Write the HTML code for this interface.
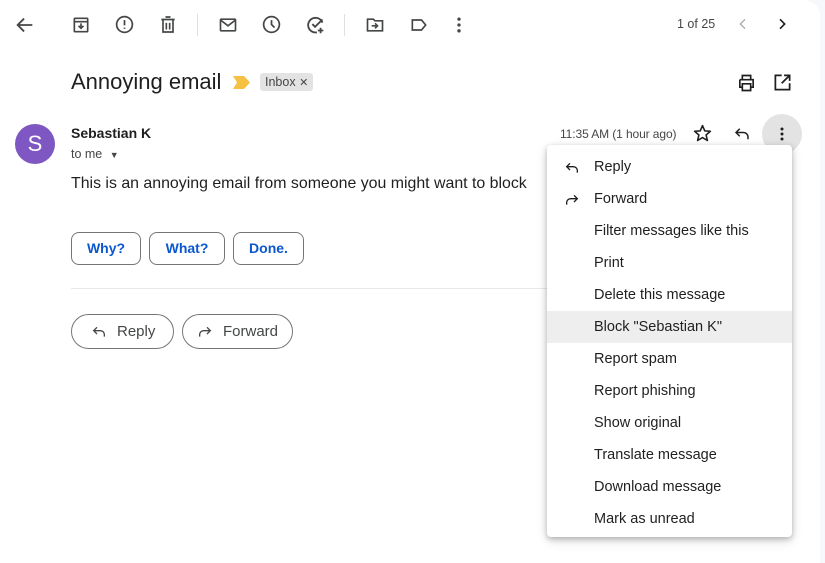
<!DOCTYPE html>
<html><head><style>
*{margin:0;padding:0;box-sizing:border-box}
body{width:825px;height:563px;background:#f6f8fc;font-family:"Liberation Sans",Arial,sans-serif;position:relative;overflow:hidden;color:#1f1f1f}
.card{position:absolute;left:0;top:0;width:820px;height:563px;background:#fff;border-top-right-radius:16px}
.ic{position:absolute}
svg{display:block}
.abs{position:absolute}
.chip{position:absolute;top:232px;height:33px;border:1px solid #747775;border-radius:8px;color:#0b57d0;font-size:14px;line-height:31px;text-align:center;font-weight:bold}
.pill{position:absolute;top:314px;height:35px;border:1px solid #747775;border-radius:18px;font-size:15px;line-height:33px;color:#444746}
.menu{position:absolute;left:547px;top:145px;width:245px;height:392px;background:#fff;border-radius:4px;box-shadow:0 2px 6px rgba(0,0,0,.25),0 4px 12px rgba(0,0,0,.12);padding-top:6px}
.mi{height:32px;line-height:32px;padding-left:47px;font-size:14.5px;color:#1f1f1f;position:relative}
.mi.h{background:#eeeeee}
</style></head><body>
<div class="card">
<svg class="ic" style="left:14px;top:14px" width="22" height="22" viewBox="0 0 24 24"><path d="M20 12H5M11 5l-7 7 7 7" fill="none" stroke="#444746" stroke-width="2"/></svg>
<svg class="ic" style="left:71px;top:15px" width="20" height="20" viewBox="0 0 24 24" fill="none" stroke="#444746" stroke-width="2"><rect x="4" y="4" width="16" height="16" rx="1"/><path d="M4 8h16M12 10v6M9 13l3 3 3-3"/></svg>
<svg class="ic" style="left:114px;top:14px" width="21" height="21" viewBox="0 0 24 24" fill="none" stroke="#444746" stroke-width="2"><circle cx="12" cy="12" r="9"/><path d="M12 7v6M12 15.5v1.5"/></svg>
<svg class="ic" style="left:158px;top:14px" width="20" height="21" viewBox="0 0 24 24" fill="none" stroke="#444746" stroke-width="2"><path d="M4 6h16M9 3h6M6 6v15h12V6M10 10v8M14 10v8"/></svg>
<div class="abs" style="left:197px;top:14px;width:1px;height:22px;background:#e0e0e0"></div>
<svg class="ic" style="left:218px;top:15px" width="20" height="20" viewBox="0 0 24 24" fill="none" stroke="#444746" stroke-width="2"><rect x="3" y="5" width="18" height="14" rx="1"/><path d="M3 6l9 7 9-7"/></svg>
<svg class="ic" style="left:261px;top:14px" width="21" height="21" viewBox="0 0 24 24" fill="none" stroke="#444746" stroke-width="2"><circle cx="12" cy="12" r="9"/><path d="M12 7v5l3.5 3.5"/></svg>
<svg class="ic" style="left:305px;top:14px" width="22" height="22" viewBox="0 0 24 24" fill="none" stroke="#444746" stroke-width="2"><path d="M19 9.5A8 8 0 1 0 13 20"/><path d="M8 11l3 3 8-8M17 15v6M14 18h6"/></svg>
<div class="abs" style="left:344px;top:14px;width:1px;height:22px;background:#e0e0e0"></div>
<svg class="ic" style="left:365px;top:15px" width="20" height="20" viewBox="0 0 24 24" fill="none" stroke="#444746" stroke-width="2"><path d="M3 5h7l2 2h9v12H3z"/><path d="M8 13h7M12 10l3 3-3 3"/></svg>
<svg class="ic" style="left:409px;top:15px" width="20" height="20" viewBox="0 0 24 24" fill="none" stroke="#444746" stroke-width="2"><path d="M4 6h11l5 6-5 6H4z"/></svg>
<svg class="ic" style="left:449px;top:15px" width="20" height="20" viewBox="0 0 24 24" fill="#444746"><circle cx="12" cy="5" r="2"/><circle cx="12" cy="12" r="2"/><circle cx="12" cy="19" r="2"/></svg>
<div class="abs" style="left:677px;top:17px;font-size:12.5px;color:#444746">1 of 25</div>
<svg class="ic" style="left:735px;top:16px" width="16" height="16" viewBox="0 0 24 24"><path d="M15 5l-7 7 7 7" fill="none" stroke="#aaa" stroke-width="2"/></svg>
<svg class="ic" style="left:774px;top:16px" width="16" height="16" viewBox="0 0 24 24"><path d="M9 5l7 7-7 7" fill="none" stroke="#1f1f1f" stroke-width="2.4"/></svg>
<div class="abs" style="left:71px;top:69px;font-size:22px;color:#1f1f1f">Annoying email</div>
<svg class="ic" style="left:233px;top:76px" width="18" height="13" viewBox="0 0 18 13"><path d="M0 0h11l6 6.5-6 6.5H0l4-6.5z" fill="#f6c042"/></svg>
<div class="abs" style="left:260px;top:73px;height:18px;padding:0 5px;background:#e3e3e3;border-radius:3px;font-size:12.5px;line-height:18px;color:#444746">Inbox <span style="font-size:11px">✕</span></div>
<svg class="ic" style="left:736px;top:73px" width="21" height="20" viewBox="0 0 24 24" fill="none" stroke="#1f1f1f" stroke-width="2"><path d="M7 8V3h10v5M4 8h16v9h-3M7 17H4V8M7 13h10v8H7z"/></svg>
<svg class="ic" style="left:773px;top:73px" width="19" height="19" viewBox="0 0 24 24" fill="none" stroke="#1f1f1f" stroke-width="2.2"><path d="M11 3H3v18h18v-8M14 3h7v7M21 3L11 13"/></svg>
<div class="abs" style="left:15px;top:124px;width:40px;height:40px;border-radius:50%;background:#7e57c2;color:#fff;font-size:22px;line-height:40px;text-align:center">S</div>
<div class="abs" style="left:71px;top:125px;font-size:14px;font-weight:bold">Sebastian K</div>
<div class="abs" style="left:71px;top:147px;font-size:12.5px;color:#444746">to me <span style="font-size:9px;margin-left:4px">▼</span></div>
<div class="abs" style="left:560px;top:127px;font-size:12px;color:#444746;letter-spacing:-0.1px">11:35 AM (1 hour ago)</div>
<svg class="ic" style="left:692px;top:123px" width="21" height="21" viewBox="0 0 24 24"><path d="M12 3l2.6 6 6.4.5-4.9 4.2 1.5 6.3L12 16.6 6.4 20l1.5-6.3L3 9.5 9.4 9z" fill="none" stroke="#1f1f1f" stroke-width="1.8" stroke-linejoin="round"/></svg>
<svg class="ic" style="left:733px;top:125px" width="18" height="18" viewBox="0 0 24 24"><path d="M9 5L4 10l5 5M4 10h10a6 6 0 0 1 6 6v3" fill="none" stroke="#1f1f1f" stroke-width="2"/></svg>
<div class="abs" style="left:762px;top:114px;width:40px;height:40px;border-radius:50%;background:#e3e3e3"></div>
<svg class="ic" style="left:772px;top:124px" width="20" height="20" viewBox="0 0 24 24" fill="#1f1f1f"><circle cx="12" cy="6" r="1.8"/><circle cx="12" cy="12" r="1.8"/><circle cx="12" cy="18" r="1.8"/></svg>
<div class="abs" style="left:71px;top:175px;font-size:15.9px;color:#1f1f1f">This is an annoying email from someone you might want to block</div>
<div class="chip" style="left:71px;width:70px">Why?</div>
<div class="chip" style="left:149px;width:76px">What?</div>
<div class="chip" style="left:233px;width:71px">Done.</div>
<div class="abs" style="left:71px;top:288px;width:480px;height:1px;background:#e8e8e8"></div>
<div class="pill" style="left:71px;width:103px"><svg class="ic" style="left:19px;top:9px" width="16" height="16" viewBox="0 0 24 24"><path d="M9 5L4 10l5 5M4 10h10a6 6 0 0 1 6 6v3" fill="none" stroke="#444746" stroke-width="2"/></svg><span style="position:absolute;left:45px">Reply</span></div>
<div class="pill" style="left:182px;width:111px"><svg class="ic" style="left:14px;top:9px" width="16" height="16" viewBox="0 0 24 24"><path d="M15 5l5 5-5 5M20 10H10a6 6 0 0 0-6 6v3" fill="none" stroke="#444746" stroke-width="2"/></svg><span style="position:absolute;left:40px">Forward</span></div>
<div class="menu">
<div class="mi"><svg class="ic" style="left:17px;top:9px" width="16" height="16" viewBox="0 0 24 24"><path d="M9 5L4 10l5 5M4 10h10a6 6 0 0 1 6 6v3" fill="none" stroke="#1f1f1f" stroke-width="2"/></svg>Reply</div>
<div class="mi"><svg class="ic" style="left:17px;top:9px" width="16" height="16" viewBox="0 0 24 24"><path d="M15 5l5 5-5 5M20 10H10a6 6 0 0 0-6 6v3" fill="none" stroke="#1f1f1f" stroke-width="2"/></svg>Forward</div>
<div class="mi">Filter messages like this</div>
<div class="mi">Print</div>
<div class="mi">Delete this message</div>
<div class="mi h">Block "Sebastian K"</div>
<div class="mi">Report spam</div>
<div class="mi">Report phishing</div>
<div class="mi">Show original</div>
<div class="mi">Translate message</div>
<div class="mi">Download message</div>
<div class="mi">Mark as unread</div>
</div>
</div>
</body></html>
